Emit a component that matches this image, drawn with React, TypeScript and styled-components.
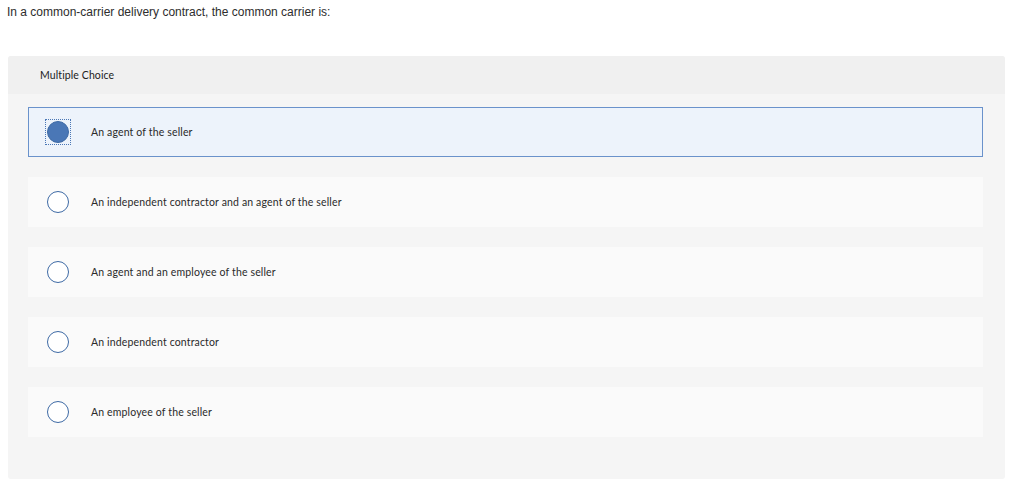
import styled, { createGlobalStyle } from "styled-components";
import { useState } from "react";

const GlobalStyle = createGlobalStyle`
  html, body {
    margin: 0;
    padding: 0;
    background: #ffffff;
    font-family: "Liberation Sans", Arial, sans-serif;
    color: #333333;
  }
`;

const Page = styled.div`
  padding: 5px 19px 10px 8px;
`;

const Question = styled.p`
  margin: 0 0 0 -1px;
  font-size: 12px;
  line-height: 15px;
  color: #2d2d2d;
`;

const Panel = styled.section`
  margin-top: 36px;
  border-radius: 3px;
  background: #f5f5f5;
  overflow: hidden;
`;

const PanelHeader = styled.div`
  height: 38px;
  display: flex;
  align-items: center;
  padding-left: 32px;
  background: #f0f0f0;
  font-family: Lato, "Liberation Sans", sans-serif;
  font-size: 10.5px;
  letter-spacing: 0.1px;
  color: #222222;
`;

const OptionList = styled.div`
  display: flex;
  flex-direction: column;
  gap: 20px;
  padding: 13px 22px 42px 20px;
`;

const Option = styled.label<{ $selected: boolean }>`
  box-sizing: border-box;
  height: 50px;
  display: flex;
  align-items: center;
  gap: 20px;
  padding-left: 16px;
  background: ${(p) => (p.$selected ? "#edf3fb" : "#fafafa")};
  border: 1px solid ${(p) => (p.$selected ? "#6a92cb" : "transparent")};
  cursor: pointer;
`;

const RadioBox = styled.span<{ $focused: boolean }>`
  box-sizing: border-box;
  width: 26px;
  height: 26px;
  display: flex;
  align-items: center;
  justify-content: center;
  outline: ${(p) => (p.$focused ? "1px dotted #4a77b6" : "none")};
  outline-offset: -1px;
  flex-shrink: 0;
`;

const Radio = styled.span<{ $checked: boolean }>`
  box-sizing: border-box;
  width: 22px;
  height: 22px;
  border-radius: 50%;
  border: 1px solid #3e6aa5;
  background: ${(p) => (p.$checked ? "#4a77b6" : "#ffffff")};
`;

const OptionText = styled.span`
  font-family: Lato, "Liberation Sans", sans-serif;
  font-size: 10.5px;
  letter-spacing: 0.15px;
  color: #2a2a2a;
`;

const choices = [
  "An agent of the seller",
  "An independent contractor and an agent of the seller",
  "An agent and an employee of the seller",
  "An independent contractor",
  "An employee of the seller",
];

export default function App() {
  const [selected, setSelected] = useState(0);

  return (
    <>
      <GlobalStyle />
      <Page>
        <Question>In a common-carrier delivery contract, the common carrier is:</Question>
        <Panel>
          <PanelHeader>Multiple Choice</PanelHeader>
          <OptionList>
            {choices.map((c, i) => (
              <Option key={c} $selected={selected === i} onClick={() => setSelected(i)}>
                <RadioBox $focused={selected === i}>
                  <Radio $checked={selected === i} />
                </RadioBox>
                <OptionText>{c}</OptionText>
              </Option>
            ))}
          </OptionList>
        </Panel>
      </Page>
    </>
  );
}
